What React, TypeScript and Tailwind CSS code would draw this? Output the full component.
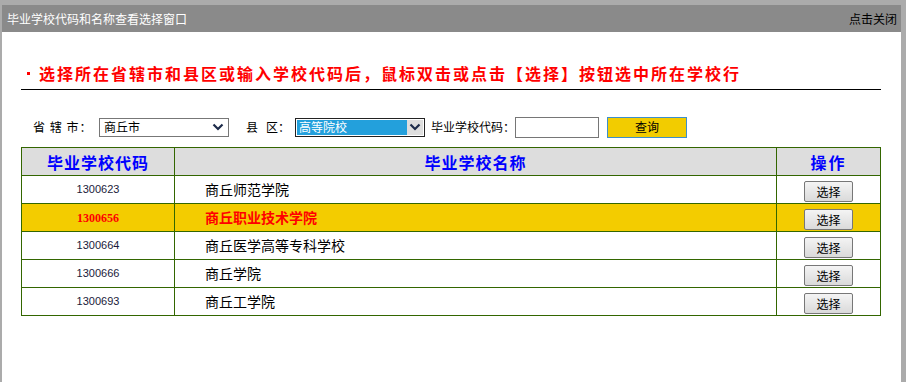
import React from "react";

interface School {
  code: string;
  name: string;
  active?: boolean;
}

const schools: School[] = [
  { code: "1300623", name: "商丘师范学院" },
  { code: "1300656", name: "商丘职业技术学院", active: true },
  { code: "1300664", name: "商丘医学高等专科学校" },
  { code: "1300666", name: "商丘学院" },
  { code: "1300693", name: "商丘工学院" },
];

const cjk = "font-['SimSun','Noto_Sans_CJK_SC',sans-serif]";

function Chevron() {
  return (
    <svg width="12" height="8" viewBox="0 0 12 8">
      <polyline
        points="1.5,1.5 6,6 10.5,1.5"
        fill="none"
        stroke="#1d2b4a"
        strokeWidth="2.2"
      />
    </svg>
  );
}

export default function App() {
  return (
    <div className={`w-[906px] h-[382px] bg-[#ababab] pt-[5px] pl-[2px] pr-[5px] flex flex-col ${cjk}`}>

      {/* title bar */}
      <div className="h-[27px] bg-[#8a8a8a] flex items-center justify-between pl-[5px] pr-[4px] text-[12px]">
        <span className="text-white">毕业学校代码和名称查看选择窗口</span>
        <span className="text-black">点击关闭</span>
      </div>

      <div className="flex-1 bg-white pl-[19px] pr-[20px]">

        <div className="border-b border-black pt-[31px] pb-[6px] pl-[6px] leading-[20px] text-[16px] font-bold text-[#ff0000] tracking-[2px] flex items-center">
          <span className="w-[3px] h-[3px] bg-[#ff0000] mr-[9px]" />
          <span>选择所在省辖市和县区或输入学校代码后，鼠标双击或点击【选择】按钮选中所在学校行</span>
        </div>

        {/* search row */}
        <div className="mt-[26px] h-[22px] flex items-center text-[12px] text-black whitespace-nowrap">
          <span className="ml-[12px] w-[66px] shrink-0 tracking-[1px]">省 辖 市：</span>
          <div className="w-[130px] h-[19px] shrink-0 border border-[#777] flex items-center justify-between pl-[4px] pr-[4px]">
            <span>商丘市</span>
            <Chevron />
          </div>
          <span className="ml-[17px] w-[49px] shrink-0">县&nbsp;&nbsp;&nbsp;区：</span>
          <div className="w-[130px] h-[19px] shrink-0 border border-[#222] flex items-stretch p-[1px]">
            <div className="flex-1 bg-[#23a0dc] text-white pl-[2px] flex items-center">高等院校</div>
            <div className="w-[16px] bg-[#dedede] flex items-center justify-center">
              <Chevron />
            </div>
          </div>
          <span className="ml-[6px] w-[84px] shrink-0">毕业学校代码：</span>
          <div className="w-[84px] h-[21px] shrink-0 border border-[#767676]" />
          <button className="ml-[8px] w-[80px] h-[21px] shrink-0 bg-[#f2cc00] border border-[#3d8fcb] text-[12px] text-black">
            查询
          </button>
        </div>

        {/* result table */}
        <table className="mt-[9px] w-[860px] border-collapse">
          <thead>
            <tr className="h-[28px] bg-[#dddddd] text-[#0000ff] text-[16px] font-bold">
              <th className="w-[153px] border border-[#336600] tracking-[1px]">毕业学校代码</th>
              <th className="border border-[#336600] tracking-[1px]">毕业学校名称</th>
              <th className="w-[104px] border border-[#336600] tracking-[2px]">操作</th>
            </tr>
          </thead>
          <tbody>
            {schools.map((s) => (
              <tr
                key={s.code}
                className={s.active ? "h-[28px] bg-[#f3cc00]" : "h-[28px] bg-white"}
              >
                <td
                  className={
                    s.active
                      ? "border border-[#336600] text-center text-[12px] font-bold text-[#ff0000] font-['Liberation_Serif',serif]"
                      : "border border-[#336600] text-center text-[11px] text-[#1a1a3a] font-['Liberation_Sans',sans-serif]"
                  }
                >
                  {s.code}
                </td>
                <td
                  className={
                    s.active
                      ? "border border-[#336600] pl-[30px] text-[14px] font-bold text-[#ff0000]"
                      : "border border-[#336600] pl-[30px] text-[14px] text-black"
                  }
                >
                  {s.name}
                </td>
                <td className="border border-[#336600] text-center">
                  <button className="w-[49px] h-[21px] align-middle border border-[#777] rounded-[2px] bg-gradient-to-b from-[#f4f4f4] to-[#dadada] text-[12px] text-black">
                    选择
                  </button>
                </td>
              </tr>
            ))}
          </tbody>
        </table>

      </div>

    </div>
  );
}
